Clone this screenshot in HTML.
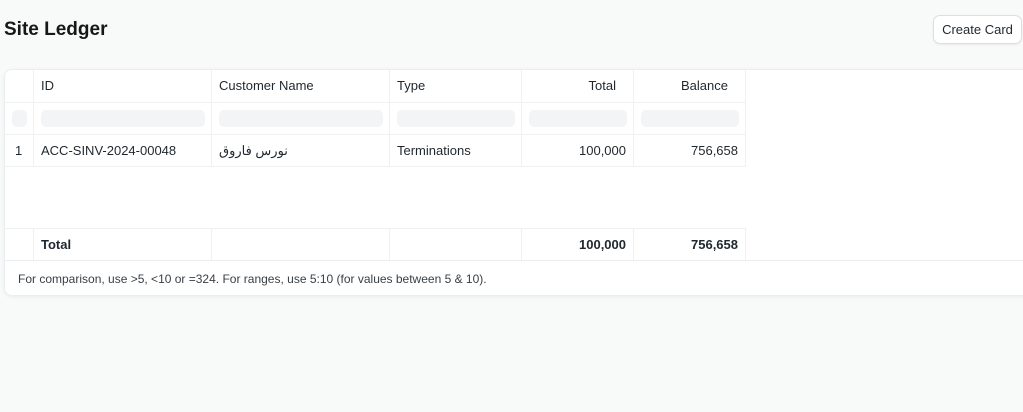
<!DOCTYPE html>
<html><head><meta charset="utf-8"><style>
*{box-sizing:border-box;margin:0;padding:0}
body{width:1023px;height:412px;background:#f8f9f9;font-family:"Liberation Sans","Noto Sans CJK SC",sans-serif;color:#1f272e;position:relative;overflow:hidden;font-size:13px}
h1{position:absolute;left:4px;top:19px;font-size:19px;font-weight:bold;color:#171717}
.btn{position:absolute;left:933px;top:15px;width:89px;height:29px;background:#fff;border:1px solid #dcdfe2;border-radius:7px;font-size:13px;line-height:27px;text-align:center;box-shadow:0 1px 2px rgba(0,0,0,.06)}
.card{position:absolute;left:4px;top:69px;width:1030px;height:227px;background:#fff;border:1px solid #ebeef0;border-radius:8px;box-shadow:0 1px 3px rgba(0,0,0,.06);overflow:hidden}
.c{position:absolute;border-right:1px solid #eef0f2;border-bottom:1px solid #eef0f2;padding:0 7px;line-height:32px;white-space:nowrap}
.r{text-align:right}
.h.r{padding-right:17px}
.f{position:absolute;height:17px;background:#f3f4f6;border-radius:5px}
.b{font-weight:bold}
.foot{position:absolute;left:13px;top:202px;font-size:12px;color:#383f45}
.line{position:absolute;left:0;width:1030px;border-top:1px solid #ebeef0}
</style></head><body>
<h1>Site Ledger</h1>
<div class="btn">Create Card</div>
<div class="card">
<div class="c" style="left:0;top:0;width:29px;height:33px"></div>
<div class="c" style="left:29px;top:0;width:178px;height:33px">ID</div>
<div class="c" style="left:207px;top:0;width:178px;height:33px">Customer Name</div>
<div class="c" style="left:385px;top:0;width:132px;height:33px">Type</div>
<div class="c r h" style="left:517px;top:0;width:112px;height:33px">Total</div>
<div class="c r h" style="left:629px;top:0;width:112px;height:33px">Balance</div>
<div class="c" style="left:0;top:33px;width:29px;height:32px"></div>
<div class="c" style="left:29px;top:33px;width:178px;height:32px"></div>
<div class="c" style="left:207px;top:33px;width:178px;height:32px"></div>
<div class="c" style="left:385px;top:33px;width:132px;height:32px"></div>
<div class="c" style="left:517px;top:33px;width:112px;height:32px"></div>
<div class="c" style="left:629px;top:33px;width:112px;height:32px"></div>
<div class="f" style="left:7px;top:40px;width:15px"></div>
<div class="f" style="left:36px;top:40px;width:164px"></div>
<div class="f" style="left:214px;top:40px;width:164px"></div>
<div class="f" style="left:392px;top:40px;width:118px"></div>
<div class="f" style="left:524px;top:40px;width:98px"></div>
<div class="f" style="left:636px;top:40px;width:98px"></div>
<div class="c" style="left:0;top:65px;width:29px;height:32px;padding-left:10px">1</div>
<div class="c" style="left:29px;top:65px;width:178px;height:32px">ACC-SINV-2024-00048</div>
<div class="c" style="left:207px;top:65px;width:178px;height:32px">نورس فاروق</div>
<div class="c" style="left:385px;top:65px;width:132px;height:32px">Terminations</div>
<div class="c r" style="left:517px;top:65px;width:112px;height:32px">100,000</div>
<div class="c r" style="left:629px;top:65px;width:112px;height:32px">756,658</div>
<div class="c" style="left:0;top:158px;width:29px;height:33px;border-top:1px solid #eef0f2"></div>
<div class="c b" style="left:29px;top:158px;width:178px;height:33px;border-top:1px solid #eef0f2">Total</div>
<div class="c" style="left:207px;top:158px;width:178px;height:33px;border-top:1px solid #eef0f2"></div>
<div class="c" style="left:385px;top:158px;width:132px;height:33px;border-top:1px solid #eef0f2"></div>
<div class="c r b" style="left:517px;top:158px;width:112px;height:33px;border-top:1px solid #eef0f2">100,000</div>
<div class="c r b" style="left:629px;top:158px;width:112px;height:33px;border-top:1px solid #eef0f2">756,658</div>
<div class="line" style="top:190px"></div>
<div class="foot">For comparison, use &gt;5, &lt;10 or =324. For ranges, use 5:10 (for values between 5 &amp; 10).</div>
</div>
</body></html>
